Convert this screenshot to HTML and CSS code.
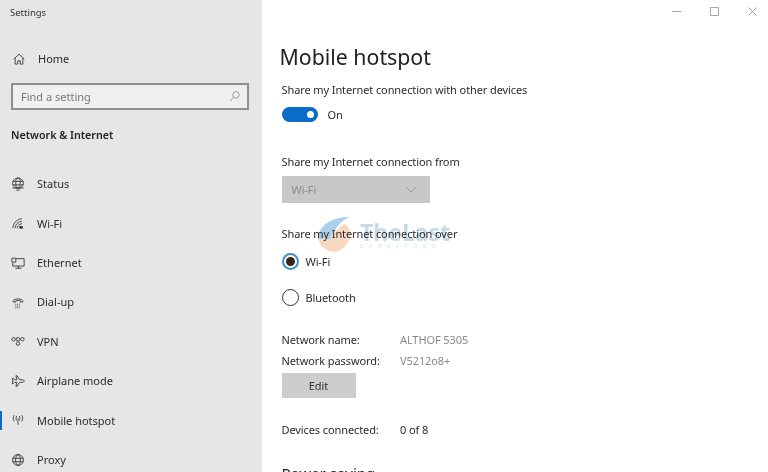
FILE: index.html
```html
<!DOCTYPE html>
<html lang="en">
<head>
<meta charset="utf-8">
<title>Settings</title>
<link rel="stylesheet" href="styles.css">
</head>
<body>
<div class="window">
  <aside class="sidebar">
    <div class="app-title">Settings</div>
    <div class="home-row">
      <svg class="icon" viewBox="0 0 16 16"><path d="M2 8.200 8 2.500l6 5.700M3.600 7v6.800h3V10h2.800v3.800h3V7"/></svg>
      <span>Home</span>
    </div>
    <div class="search">
      <span>Find a setting</span>
      <svg class="search-icon" viewBox="0 0 16 16"><circle cx="9.800" cy="6" r="4"/><path d="M7 9 2.500 13.500"/></svg>
    </div>
    <div class="section">Network &amp; Internet</div>
    <nav class="nav">
      <div class="nav-item">
        <svg class="icon" viewBox="0 0 16 16"><ellipse cx="8" cy="7" rx="6.200" ry="5.800"/><ellipse cx="8" cy="7" rx="2.600" ry="5.800"/><path d="M2 5h12M2 9h12M1.500 12.600h13M6 15h4"/></svg>
        <span>Status</span>
      </div>
      <div class="nav-item">
        <svg class="icon" viewBox="0 0 16 16"><path d="M2 14C2.500 8 7 3.500 12.500 3M4.500 14c.4-4.200 3.500-7.500 8-8M7 14c.3-2.500 2.200-4.800 5.500-5.200"/><path class="fill" d="M9.500 11.500h4v3h-4z"/></svg>
        <span>Wi-Fi</span>
      </div>
      <div class="nav-item">
        <svg class="icon" viewBox="0 0 16 16"><path d="M5.500 3h9.500v8.500H2V8M8.500 11.500V14M5 14h7M1 2.500h4.500v4.500H1z"/></svg>
        <span>Ethernet</span>
      </div>
      <div class="nav-item">
        <svg class="icon" viewBox="0 0 16 16"><path d="M2.500 8V6.500C4 3.800 12 3.800 13.500 6.500V8h-3V6.500c-1.500-.6-3.500-.6-5 0V8z"/><path class="dots" d="M5 10.500h6M5 12.500h6M5 14.500h6"/></svg>
        <span>Dial-up</span>
      </div>
      <div class="nav-item">
        <svg class="icon" viewBox="0 0 16 16"><circle cx="3" cy="6" r="2"/><circle cx="13" cy="6" r="2"/><circle cx="8" cy="6" r="2"/><circle cx="8" cy="11" r="2"/></svg>
        <span>VPN</span>
      </div>
      <div class="nav-item">
        <svg class="icon" viewBox="0 0 16 16"><path d="M15 8c0-1-1-1.500-2-1.500H9.800L7 2H5.600l1.200 4.500H4L2.800 5H1.500l.6 3-.6 3h1.300L4 9.500h2.800L5.600 14H7l2.800-4.500H13c1 0 2-.5 2-1.500z"/></svg>
        <span>Airplane mode</span>
      </div>
      <div class="nav-item active">
        <svg class="icon" viewBox="0 0 16 16"><path d="M8 6V13.500M6.500 3.500c-1 1.500-1 3.500 0 5M9.500 3.500c1 1.500 1 3.500 0 5M3.800 2.500c-1.600 2.200-1.600 5 0 7M12.200 2.500c1.600 2.200 1.600 5 0 7"/></svg>
        <span>Mobile hotspot</span>
      </div>
      <div class="nav-item">
        <svg class="icon" viewBox="0 0 16 16"><circle cx="8" cy="8" r="6.200"/><ellipse cx="8" cy="8" rx="2.700" ry="6.200"/><path d="M2.200 6h11.600M2.200 10h11.600"/></svg>
        <span>Proxy</span>
      </div>
    </nav>
  </aside>

  <main class="content">
    <div class="controls">
      <svg viewBox="0 0 10 10"><path d="M0 5h10"/></svg>
      <svg viewBox="0 0 10 10"><path d="M.5.500h9v9h-9z"/></svg>
      <svg viewBox="0 0 10 10"><path d="M.5.500l9 9M9.500.500l-9 9"/></svg>
    </div>
    <h1 class="title">Mobile hotspot</h1>
    <p class="label">Share my Internet connection with other devices</p>
    <div class="toggle-row">
      <span class="toggle"><span class="knob"></span></span>
      <span>On</span>
    </div>
    <p class="label from">Share my Internet connection from</p>
    <div class="select">
      <span>Wi-Fi</span>
      <svg viewBox="0 0 12 7"><path d="M.5.500 6 6l5.500-5.500"/></svg>
    </div>
    <p class="label over">Share my Internet connection over</p>
    <div class="radio-row first">
      <span class="radio on"><span class="dot"></span></span>
      <span>Wi-Fi</span>
    </div>
    <div class="radio-row second">
      <span class="radio"></span>
      <span>Bluetooth</span>
    </div>
    <dl class="info">
      <dt>Network name:</dt><dd class="muted">ALTHOF 5305</dd>
      <dt>Network password:</dt><dd class="muted">V5212o8+</dd>
    </dl>
    <div class="button">Edit</div>
    <dl class="info devices">
      <dt>Devices connected:</dt><dd>0 of 8</dd>
    </dl>
    <h2 class="subtitle">Power saving</h2>

    <div class="watermark" aria-hidden="true">
      <svg viewBox="0 0 36 36"><path class="wm-blue" d="M0 22C0 10 12 0 31 0c-8 4-15 12-18 22z"/><path class="wm-orange" d="M13 22c3-6 7-11 13-15 4 2 6 5 6 10 0 9-7 17-16 18C7 34 2 29 0 22z"/></svg>
      <div class="wm-text">
        <span class="wm-name">TheLast</span>
        <span class="wm-sub">SURVIVORS</span>
      </div>
    </div>
  </main>
</div>
</body>
</html>
```
FILE: styles.css
```css
* { box-sizing: border-box; }
html, body { margin: 0; height: 472px; overflow: hidden; background: #fff; }
body { font-family: "Noto Sans", "Open Sans", sans-serif; font-size: 11px; color: #2b2b2b; }
svg { fill: none; stroke: currentColor; stroke-width: 1; display: block; }
p, h1, h2, dl, dd { margin: 0; }

.window { display: flex; width: 768px; height: 472px; }

.sidebar { width: 262px; flex: none; background: #e6e6e6; overflow: hidden; filter: blur(.3px); }
.app-title { font-size: 9.500px; line-height: 14px; padding: 6px 0 0 10px; color: #333; }
.home-row { display: flex; align-items: center; gap: 12px; padding: 29px 0 0 12px; height: 49px; line-height: 20px; }
.icon { width: 14px; height: 14px; flex: none; color: #333; }
.search { margin: 14px 0 0 11px; height: 27px; width: 238px; border: 2px solid #8f8f8f; background: #f0f0f0; display: flex; align-items: center; justify-content: space-between; padding: 0 6px 0 8px; color: #777; }
.search-icon { width: 13px; height: 13px; color: #888; }
.section { margin: 16px 0 0 11px; font-weight: 600; font-size: 10.700px; line-height: 18px; color: #222; }
.nav { margin-top: 20px; }
.nav-item { display: flex; align-items: center; gap: 12px; height: 39.430px; padding-left: 11px; position: relative; }
.nav-item.active::before { content: ""; position: absolute; left: 0; top: 10px; width: 2px; height: 19px; background: #0a6cc4; }
.fill { fill: currentColor; stroke: none; }
.dots { stroke-dasharray: 1 1; }

.content { flex: 1; padding: 0 0 0 19.500px; position: relative; overflow: hidden; letter-spacing: -.1px; filter: blur(.25px); }
.controls { position: absolute; top: 7px; right: 11px; display: flex; gap: 29px; color: #9a9a9a; }
.controls svg { width: 9px; height: 9px; }
.title { margin: 42px 0 0 -2px; font-size: 21.300px; font-weight: 400; letter-spacing: 0; line-height: 30px; color: #222; }
.label { line-height: 16px; color: #2b2b2b; }
.title + .label { margin-top: 10px; }
.toggle-row { display: flex; align-items: center; gap: 10px; margin-top: 7px; height: 18px; }
.toggle { width: 36px; height: 15px; border-radius: 8px; background: #0a6cc9; display: flex; align-items: center; justify-content: flex-end; padding-right: 4px; }
.knob { width: 7px; height: 7px; border-radius: 50%; background: #fff; }
.from { margin-top: 31px; }
.select { width: 148px; height: 27px; margin-top: 6px; background: #c8c8c8; color: #8c8c8c; display: flex; align-items: center; justify-content: space-between; padding: 0 13px 0 10px; }
.select svg { width: 12px; height: 7px; color: #9a9a9a; }
.over { margin-top: 23px; position: relative; z-index: 1; }
.radio-row { display: flex; align-items: center; gap: 7px; height: 18px; }
.first { margin-top: 10px; }
.second { margin-top: 18px; }
.radio { width: 17px; height: 17px; border-radius: 50%; border: 1.500px solid #333; display: flex; align-items: center; justify-content: center; flex: none; }
.radio.on { border: 2px solid #3f8fc8; }
.dot { width: 9px; height: 9px; border-radius: 50%; background: #33261c; }
.info { display: grid; grid-template-columns: 118.500px auto; row-gap: 4.500px; line-height: 16px; margin-top: 26px; }
.muted { color: #8a8a8a; }
.button { width: 74px; height: 25px; background: #cdcdcd; display: flex; align-items: center; justify-content: center; margin-top: 4px; color: #333; }
.devices { margin-top: 24px; }
.subtitle { margin-top: 25px; font-size: 15px; font-weight: 400; letter-spacing: 0; line-height: 20px; color: #222; }

.watermark { position: absolute; left: 56px; top: 217px; display: flex; gap: 6px; opacity: .5; letter-spacing: 0; }
.watermark svg { width: 36px; height: 36px; stroke: none; }
.wm-blue { fill: #5b9fd6; }
.wm-orange { fill: #f4b183; }
.wm-text { display: flex; flex-direction: column; margin-top: 5px; }
.wm-name { font-size: 23px; line-height: 21px; font-weight: 700; color: #8db6d6; }
.wm-sub { font-size: 5px; line-height: 7px; letter-spacing: 6px; color: #b9b9b9; }
```
